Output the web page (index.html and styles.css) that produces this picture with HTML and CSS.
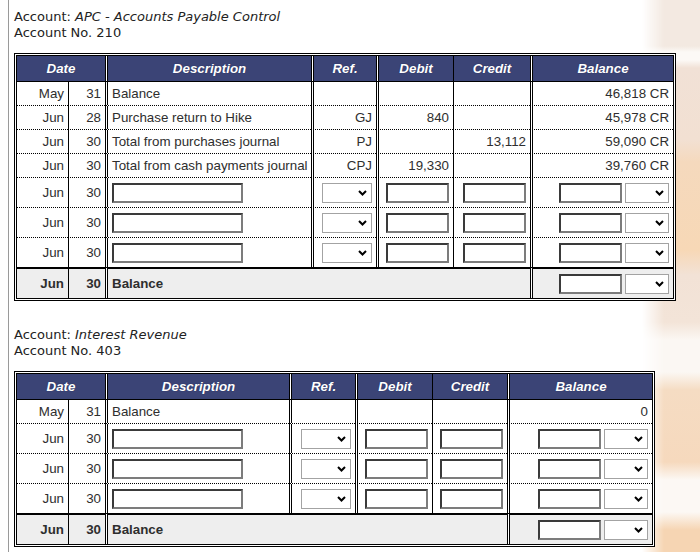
FILE: index.html
```html
<!DOCTYPE html>
<html lang="en">
<head>
<meta charset="utf-8">
<title>Ledger accounts</title>
<link rel="stylesheet" href="styles.css">
</head>
<body>
<div class="watermark" aria-hidden="true"></div>
<div class="page">
  <section class="account">
    <div class="acct-head">
      <div>Account: <i>APC - Accounts Payable Control</i></div>
      <div>Account No. 210</div>
    </div>
    <table class="ledger ledger-a">
      <colgroup>
        <col class="c-mon"><col class="c-day"><col class="c-desc-a"><col class="c-ref-a"><col class="c-dr"><col class="c-cr-a"><col class="c-bal-a">
      </colgroup>
      <thead>
        <tr><th colspan="2">Date</th><th class="g">Description</th><th class="g">Ref.</th><th class="g">Debit</th><th class="s">Credit</th><th class="g">Balance</th></tr>
      </thead>
      <tbody>
        <tr class="first"><td>May</td><td class="s">31</td><td class="g desc">Balance</td><td class="g"></td><td class="g"></td><td class="s"></td><td class="g">46,818 CR</td></tr>
        <tr><td>Jun</td><td class="s">28</td><td class="g desc">Purchase return to Hike</td><td class="g">GJ</td><td class="g">840</td><td class="s"></td><td class="g">45,978 CR</td></tr>
        <tr><td>Jun</td><td class="s">30</td><td class="g desc">Total from purchases journal</td><td class="g">PJ</td><td class="g"></td><td class="s">13,112</td><td class="g">59,090 CR</td></tr>
        <tr><td>Jun</td><td class="s">30</td><td class="g desc">Total from cash payments journal</td><td class="g">CPJ</td><td class="g">19,330</td><td class="s"></td><td class="g">39,760 CR</td></tr>
        <tr class="entry"><td>Jun</td><td class="s">30</td><td class="g desc"><input class="txt wide" type="text"></td><td class="g"><span class="sel"><select></select><svg width="9" height="6" viewBox="0 0 9 6"><path d="M1 1L4.5 4.5L8 1" fill="none" stroke="#000" stroke-width="2"/></svg></span></td><td class="g"><input class="txt" type="text"></td><td class="s"><input class="txt" type="text"></td><td class="g"><div class="bal"><input class="txt" type="text"><span class="sel small"><select></select><svg width="9" height="6" viewBox="0 0 9 6"><path d="M1 1L4.5 4.5L8 1" fill="none" stroke="#000" stroke-width="2"/></svg></span></div></td></tr>
        <tr class="entry"><td>Jun</td><td class="s">30</td><td class="g desc"><input class="txt wide" type="text"></td><td class="g"><span class="sel"><select></select><svg width="9" height="6" viewBox="0 0 9 6"><path d="M1 1L4.5 4.5L8 1" fill="none" stroke="#000" stroke-width="2"/></svg></span></td><td class="g"><input class="txt" type="text"></td><td class="s"><input class="txt" type="text"></td><td class="g"><div class="bal"><input class="txt" type="text"><span class="sel small"><select></select><svg width="9" height="6" viewBox="0 0 9 6"><path d="M1 1L4.5 4.5L8 1" fill="none" stroke="#000" stroke-width="2"/></svg></span></div></td></tr>
        <tr class="entry"><td>Jun</td><td class="s">30</td><td class="g desc"><input class="txt wide" type="text"></td><td class="g"><span class="sel"><select></select><svg width="9" height="6" viewBox="0 0 9 6"><path d="M1 1L4.5 4.5L8 1" fill="none" stroke="#000" stroke-width="2"/></svg></span></td><td class="g"><input class="txt" type="text"></td><td class="s"><input class="txt" type="text"></td><td class="g"><div class="bal"><input class="txt" type="text"><span class="sel small"><select></select><svg width="9" height="6" viewBox="0 0 9 6"><path d="M1 1L4.5 4.5L8 1" fill="none" stroke="#000" stroke-width="2"/></svg></span></div></td></tr>
        <tr class="total"><td>Jun</td><td class="s">30</td><td class="g desc" colspan="4">Balance</td><td class="g"><div class="bal"><input class="txt" type="text"><span class="sel small"><select></select><svg width="9" height="6" viewBox="0 0 9 6"><path d="M1 1L4.5 4.5L8 1" fill="none" stroke="#000" stroke-width="2"/></svg></span></div></td></tr>
      </tbody>
    </table>
  </section>

  <section class="account">
    <div class="acct-head">
      <div>Account: <i>Interest Revenue</i></div>
      <div>Account No. 403</div>
    </div>
    <table class="ledger ledger-b">
      <colgroup>
        <col class="c-mon"><col class="c-day"><col class="c-desc-b"><col class="c-ref-b"><col class="c-dr"><col class="c-cr-b"><col class="c-bal-b">
      </colgroup>
      <thead>
        <tr><th colspan="2">Date</th><th class="g">Description</th><th class="g">Ref.</th><th class="g">Debit</th><th class="s">Credit</th><th class="g">Balance</th></tr>
      </thead>
      <tbody>
        <tr class="first"><td>May</td><td class="s">31</td><td class="g desc">Balance</td><td class="g"></td><td class="g"></td><td class="s"></td><td class="g">0</td></tr>
        <tr class="entry"><td>Jun</td><td class="s">30</td><td class="g desc"><input class="txt wide" type="text"></td><td class="g"><span class="sel"><select></select><svg width="9" height="6" viewBox="0 0 9 6"><path d="M1 1L4.5 4.5L8 1" fill="none" stroke="#000" stroke-width="2"/></svg></span></td><td class="g"><input class="txt" type="text"></td><td class="s"><input class="txt" type="text"></td><td class="g"><div class="bal"><input class="txt" type="text"><span class="sel small"><select></select><svg width="9" height="6" viewBox="0 0 9 6"><path d="M1 1L4.5 4.5L8 1" fill="none" stroke="#000" stroke-width="2"/></svg></span></div></td></tr>
        <tr class="entry"><td>Jun</td><td class="s">30</td><td class="g desc"><input class="txt wide" type="text"></td><td class="g"><span class="sel"><select></select><svg width="9" height="6" viewBox="0 0 9 6"><path d="M1 1L4.5 4.5L8 1" fill="none" stroke="#000" stroke-width="2"/></svg></span></td><td class="g"><input class="txt" type="text"></td><td class="s"><input class="txt" type="text"></td><td class="g"><div class="bal"><input class="txt" type="text"><span class="sel small"><select></select><svg width="9" height="6" viewBox="0 0 9 6"><path d="M1 1L4.5 4.5L8 1" fill="none" stroke="#000" stroke-width="2"/></svg></span></div></td></tr>
        <tr class="entry"><td>Jun</td><td class="s">30</td><td class="g desc"><input class="txt wide" type="text"></td><td class="g"><span class="sel"><select></select><svg width="9" height="6" viewBox="0 0 9 6"><path d="M1 1L4.5 4.5L8 1" fill="none" stroke="#000" stroke-width="2"/></svg></span></td><td class="g"><input class="txt" type="text"></td><td class="s"><input class="txt" type="text"></td><td class="g"><div class="bal"><input class="txt" type="text"><span class="sel small"><select></select><svg width="9" height="6" viewBox="0 0 9 6"><path d="M1 1L4.5 4.5L8 1" fill="none" stroke="#000" stroke-width="2"/></svg></span></div></td></tr>
        <tr class="total"><td>Jun</td><td class="s">30</td><td class="g desc" colspan="4">Balance</td><td class="g"><div class="bal"><input class="txt" type="text"><span class="sel small"><select></select><svg width="9" height="6" viewBox="0 0 9 6"><path d="M1 1L4.5 4.5L8 1" fill="none" stroke="#000" stroke-width="2"/></svg></span></div></td></tr>
      </tbody>
    </table>
  </section>
</div>
</body>
</html>
```

FILE: styles.css
```css
* { box-sizing: border-box; }

html {
  margin: 0;
  background: #fff;
}

body {
  margin: 0;
  font-family: "Liberation Sans", Arial, sans-serif;
  position: relative;
  min-height: 552px;
}

.watermark {
  position: absolute;
  z-index: -1;
  top: 0;
  right: 0;
  width: 58px;
  height: 552px;
  background: linear-gradient(to bottom,
    #f3e9e1 0, #f3e9e1 46px, #fcf9f6 52px, #fcf9f6 60px,
    #f1e1d6 68px, #f2e0d2 140px, #f5d9bd 162px, #f7d8b6 250px,
    #f2e2d6 275px, #f3e4d8 322px, #fbf7f3 340px, #fbf7f3 372px,
    #f5dcc3 390px, #f6d9bd 462px, #fcf8f4 480px, #fcf8f4 512px,
    #f6d5b3 530px, #f6d5b3 552px);
  -webkit-mask-image: linear-gradient(to right, transparent 0, #000 22px);
  mask-image: linear-gradient(to right, transparent 0, #000 22px);
}

.page {
  margin-left: 8px;
  border-left: 1px solid #9a9a9a;
  padding: 9px 0 0 5px;
  min-height: 552px;
}

.account + .account { margin-top: 26px; }

.acct-head {
  font-family: "DejaVu Sans", Verdana, sans-serif;
  font-size: 13px;
  line-height: 16px;
  color: #222;
}

.ledger {
  margin-top: 12px;
  border: 3px double #000;
  border-collapse: separate;
  border-spacing: 0;
  table-layout: fixed;
  background: #fff;
  font-size: 13.33px;
  color: #2e2e2e;
}

.ledger-a { width: 662px; }
.ledger-b { width: 641px; }

.c-mon { width: 51px; }
.c-day { width: 37px; }
.c-desc-a { width: 206px; }
.c-ref-a { width: 65px; }
.c-dr { width: 77px; }
.c-cr-a { width: 77px; }
.c-bal-a { width: 143px; }
.c-desc-b { width: 184px; }
.c-ref-b { width: 66px; }
.c-cr-b { width: 75px; }
.c-bal-b { width: 145px; }

.ledger th {
  height: 26px;
  padding: 0 4px;
  background: #3b4476;
  background-clip: padding-box;
  color: #fff;
  font-style: italic;
  font-weight: bold;
  text-align: center;
  border-bottom: 1px solid #000;
  text-shadow: 0 0 1px #1c2250;
}

.ledger td {
  height: 24px;
  padding: 0 4px;
  text-align: right;
  vertical-align: middle;
  white-space: nowrap;
  border-top: 1px dotted #000;
}

.ledger tr.first td { height: 23px; border-top: 0; }
.ledger tr.entry td { height: 30px; }
.ledger tr.total td {
  height: 31px;
  border-top: 2px solid #000;
  background: #eeeeee;
  background-clip: padding-box;
  font-weight: bold;
}

.ledger .g { border-left: 3px double #000; }
.ledger .s { border-left: 1px solid #000; }
.ledger td.desc { text-align: left; }

.txt {
  width: 63px;
  height: 20px;
  margin: 0;
  padding: 0 2px;
  border: 2px solid;
  border-color: #3a3a3a #7c7c7c #7c7c7c #3a3a3a;
  background: #fff;
  font: inherit;
  vertical-align: middle;
}

.txt.wide { width: 131px; }

.sel {
  display: inline-grid;
  width: 50px;
  height: 20px;
  vertical-align: middle;
}

.sel.small { width: 44px; }

.sel select {
  grid-area: 1 / 1;
  appearance: none;
  -webkit-appearance: none;
  width: 100%;
  height: 100%;
  margin: 0;
  padding: 0;
  border: 1px solid #a3a3a3;
  border-radius: 0;
  background: #fff;
}

.sel svg {
  grid-area: 1 / 1;
  justify-self: end;
  align-self: center;
  margin-right: 5px;
  pointer-events: none;
}

.bal {
  display: flex;
  justify-content: flex-end;
  align-items: center;
  gap: 3px;
}
```
